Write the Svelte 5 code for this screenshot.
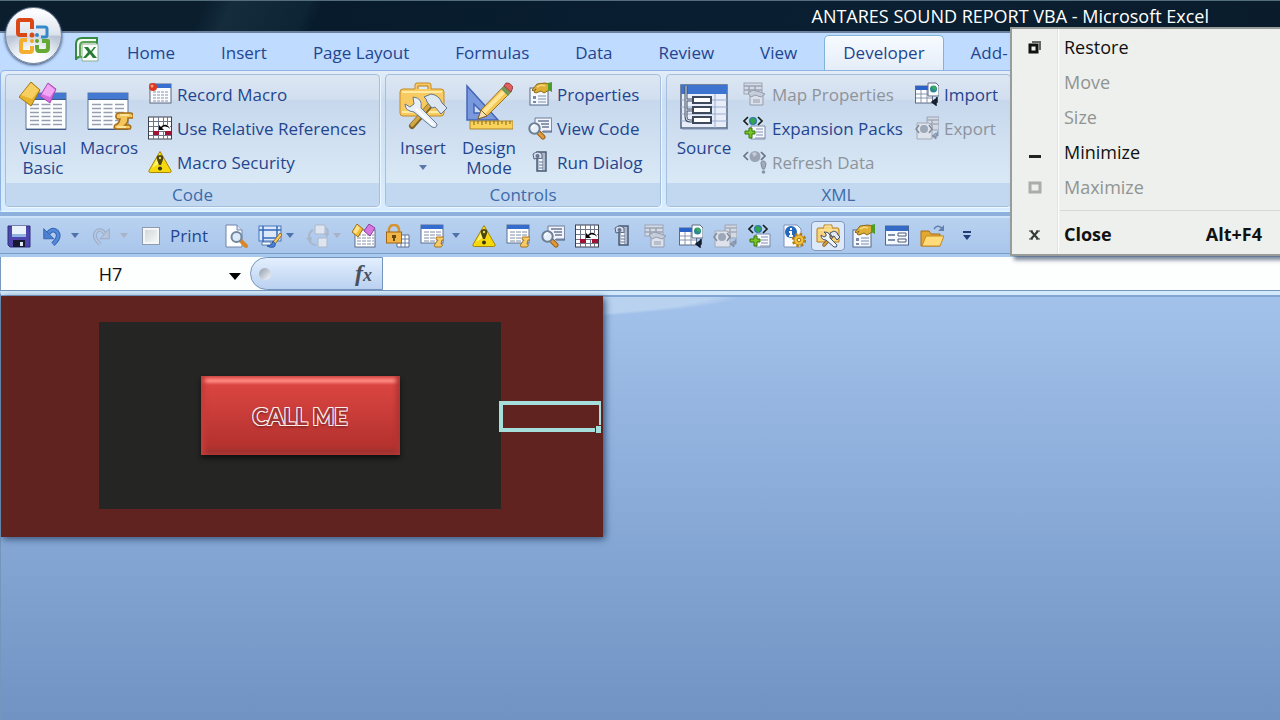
<script lang="ts">
  /**
   * Spreadsheet window: ribbon on the Developer tab, quick access toolbar,
   * formula bar, worksheet and the window's system menu
   */

  interface Command {
    icon: string;
    label: string;
    disabled?: boolean;
  }

  const tabs = [
    "Home",
    "Insert",
    "Page Layout",
    "Formulas",
    "Data",
    "Review",
    "View",
    "Developer",
    "Add-",
  ];

  const codeCommands: Command[] = [
    { icon: "record", label: "Record Macro" },
    { icon: "relative", label: "Use Relative References" },
    { icon: "warning", label: "Macro Security" },
  ];

  const controlCommands: Command[] = [
    { icon: "properties", label: "Properties" },
    { icon: "viewcode", label: "View Code" },
    { icon: "dialog", label: "Run Dialog" },
  ];

  const xmlCommands: Command[] = [
    { icon: "map", label: "Map Properties", disabled: true },
    { icon: "expansion", label: "Expansion Packs" },
    { icon: "refresh", label: "Refresh Data", disabled: true },
  ];

  const xmlTransfer: Command[] = [
    { icon: "import", label: "Import" },
    { icon: "export", label: "Export", disabled: true },
  ];

  const shortcuts = [
    "warning",
    "macros",
    "viewcode",
    "relative",
    "dialog",
    "map",
    "import",
    "export",
    "expansion",
    "addins",
    "toolbox",
    "properties",
    "form",
    "folder",
  ];

  let activeTab = $state("Developer");
  let cellName = $state("H7");
  let formula = $state("");
  let printChecked = $state(false);
</script>

{#snippet icon(name: string, size: number = 24)}
  <svg class="icon" width={size} height={size} viewBox="0 0 24 24" aria-hidden="true">
    {#if name === "record"}
      <rect x="2" y="2" width="21" height="19" fill="#fbfcff" stroke="#59677f" />
      <rect x="2" y="2" width="21" height="4" fill="#376fd0" />
      <path d="M5 10h15M5 13h15M5 16h15M5 19h15" stroke="#8791a8" stroke-dasharray="3 1" />
      <circle cx="5" cy="5" r="4" fill="#db3a20" />
      <circle cx="4" cy="4" r="1.5" fill="#ff9a80" />
    {:else if name === "relative"}
      <rect x="0.5" y="1" width="23" height="22" fill="#fff" stroke="#3a3f4e" />
      <path
        d="M5.500 1v22M10.500 1v22M15.500 1v22M19.500 1v22M1 5.500h22M1 10.500h22M1 15.500h22M1 19.500h22"
        stroke="#70768a"
      />
      <rect x="11" y="9" width="11" height="6" fill="#fff" />
      <rect x="5" y="15" width="6" height="4" fill="#a40f34" />
      <rect x="17" y="15" width="6" height="4" fill="#a40f34" />
      <path d="M11 9v5h5l-2-2c2-2 5-2 8 1-1-4-6-6-9-2z" fill="#000" />
    {:else if name === "warning"}
      <path
        d="M12 1.500 23 20.500q.8 2-1.500 2h-19q-2.300 0-1.500-2z"
        fill="#f6d90c"
        stroke="#a78508"
        stroke-linejoin="round"
      />
      <path d="M12 3 4 18l8-5z" fill="#fff46b" />
      <path d="M12 5q5 0 2.500 6L13 15h-2l-1.500-4Q7 5 12 5z" fill="#4b4514" />
      <circle cx="12" cy="8" r="1.200" fill="#e8da5b" />
      <circle cx="12" cy="18.500" r="2" fill="#3a3512" />
    {:else if name === "properties"}
      <rect x="2" y="6" width="18" height="17" fill="#f5f8ff" stroke="#526887" />
      <path d="M5 14h3v3H5zM5 19h3v2H5z" fill="#7c89a3" />
      <path d="M10 14h8M10 17h8M10 20h8" stroke="#788dad" />
      <path
        d="M4 8 9 2l8-1 4 1v6l-5 3-3-2-5 2-2-1 2-3-3 2z"
        fill="#deae35"
        stroke="#8a6818"
        stroke-linejoin="round"
      />
      <path d="m9 5 4-2 4 1" fill="none" stroke="#f6d87c" stroke-width="1.500" />
      <path d="m20 1 4-1v10l-4-2z" fill="#4e9d28" />
    {:else if name === "viewcode"}
      <path d="M7 2h17v13h-9l-3 3v-3H7z" fill="#f1f4fc" stroke="#6d7b98" />
      <path d="M10 5h11M13 8h8M14 11h7" stroke="#6b7997" stroke-width="1.400" />
      <path d="M24 3v13h-9" fill="none" stroke="#4f5f80" />
      <path d="m11 17 4 4" stroke="#9c6118" stroke-width="5" stroke-linecap="round" />
      <path d="m11 17 4 4" stroke="#e29a3a" stroke-width="3" stroke-linecap="round" />
      <circle cx="6.500" cy="12.500" r="5.200" fill="#e7f0fa" stroke="#6d7f95" stroke-width="2" />
      <path d="M4 12q0-3 3-3" fill="none" stroke="#fff" stroke-width="1.500" />
    {:else if name === "dialog"}
      <path d="M9 2h9v19h-9z" fill="#aeb9cc" stroke="#4c5c78" stroke-width="1.500" />
      <path d="M5 4q5-4 9 0v5q-4-2-8 0z" fill="#d5ddeb" stroke="#53627c" />
      <circle cx="9.500" cy="6" r="2" fill="#647694" />
      <path d="M11 9h3v11h-3z" fill="#f2f6ff" />
      <path d="M11 12h4M11 15h4M11 18h4" stroke="#64728b" />
    {:else if name === "map"}
      <rect x="1" y="1" width="18" height="11" fill="#d6dbe6" stroke="#9ba4b5" />
      <path d="M1 4h18M6 4v8M12 4v8M1 8h18" stroke="#9ba4b5" stroke-width="1.500" />
      <path d="M7 12h13v11H7z" fill="#dce1eb" stroke="#929cae" />
      <path d="m5 11 5-3 7 2 5 2-4 3-6-2-4 2z" fill="#c5ccda" stroke="#929cae" />
      <path d="M10 18h7M10 20h7" stroke="#929cae" />
    {:else if name === "expansion"}
      <path d="M8 10h14v13H8z" fill="#f6f9ff" stroke="#7d8baa" />
      <path d="M13 13h7M13 16h7M13 19h7M12 22h10" stroke="#8290ac" />
      <path d="m5 1-4 4 4 4M15 1l4 4-4 4" fill="none" stroke="#16221e" stroke-width="1.700" />
      <circle cx="10" cy="5" r="4" fill="#2b78b5" />
      <path d="M8 2q5 0 5 3l-3 4-3-4z" fill="#35a54a" />
      <path
        d="M6 12h3v3h3v3H9v4H6v-4H2v-3h4z"
        fill="#79c525"
        stroke="#35770d"
        stroke-linejoin="round"
      />
    {:else if name === "refresh"}
      <path d="M5 2 1 6l4 4M18 2l4 4-4 4" fill="none" stroke="#687488" stroke-width="1.700" />
      <circle cx="12" cy="6.500" r="5.500" fill="#9aa4b5" />
      <path d="M9 3q4-2 5 1l-3 3z" fill="#c6ccd8" />
      <path d="M20 11q4 0 2.500 5l-1 3h-2l-1-3Q17 11 20 11z" fill="#a1abba" stroke="#7f8999" />
      <circle cx="20.500" cy="22" r="1.800" fill="#8a94a5" />
    {:else if name === "import"}
      <rect x="0.500" y="4" width="17" height="17" fill="#fff" stroke="#5b6b8b" />
      <path d="M1 4h17v4H1z" fill="#2b62c7" />
      <path d="M1 12h16M1 16h16M6 8v13M12 8v13" stroke="#8694b1" />
      <path d="M13 1h8l3 3v10H13z" fill="#f7faff" stroke="#5e6b82" />
      <circle cx="18.500" cy="7" r="3.500" fill="#2b8791" />
      <path d="M17 4q5 0 4 4l-3-1z" fill="#39b444" />
      <path d="M22 15v5h-3M21 17l-4 3 4 3z" fill="#111b2c" stroke="#111b2c" stroke-width="1.500" />
    {:else if name === "export"}
      <path d="M12 1h12v13H12z" fill="#d4d9e3" stroke="#9aa3b3" />
      <path d="M12 4h12M12 8h12M17 4v10" stroke="#a2abba" stroke-width="1.500" />
      <path d="M2 7h12l3 3v13H2z" fill="#dde2eb" stroke="#a1a9b7" />
      <path d="m4 9-3 4 3 4M14 9l3 4-3 4" fill="none" stroke="#828d9e" stroke-width="1.500" />
      <circle cx="9" cy="13" r="4" fill="#9ca7b8" />
      <path d="M23 15v5h-4M21 17l-4 3 4 3z" fill="#8794aa" stroke="#8794aa" />
    {:else if name === "macros"}
      <rect x="1" y="1" width="22" height="18" fill="#fff" stroke="#5f708f" />
      <path d="M1 1h22v4H1z" fill="#356dce" />
      <path d="M4 8h17M4 11h17M4 14h15M4 17h13" stroke="#7f8ba5" stroke-dasharray="5 1" />
      <path
        d="M16 14q0-1 1-1h7v3h-2l-1 4h1q1 2-1 3h-6q-1-2 0-3l3-4h-1q-1 0-1-2z"
        fill="#f6cb66"
        stroke="#a87019"
        stroke-linejoin="round"
      />
    {:else if name === "addins"}
      <path d="M2 1h13l4 4v18H2z" fill="#f9fbff" stroke="#7a92b8" />
      <circle cx="9" cy="8" r="6" fill="#2468bd" />
      <path d="M9 4v2M7 8h2v4M7 12h4" fill="none" stroke="#fff" stroke-width="2" />
      <circle
        cx="17"
        cy="16"
        r="6"
        fill="none"
        stroke="#b27a12"
        stroke-width="2.500"
        stroke-dasharray="2.500 2.200"
      />
      <circle cx="17" cy="16" r="5" fill="#f0c23b" stroke="#b88216" />
      <circle cx="17" cy="16" r="1.800" fill="#fff3b3" stroke="#a66e10" />
    {:else if name === "toolbox"}
      <path
        d="M8 4V1h8v3h6q1 0 1 2v12H1V6q0-2 1-2z"
        fill="#f9d47c"
        stroke="#b77b19"
        stroke-linejoin="round"
      />
      <path d="M9 4V2h6v2M3 6h18" fill="none" stroke="#ffeaa2" />
      <path d="m8 21 10-11" stroke="#77501e" stroke-width="3.500" stroke-linecap="round" />
      <path d="m8 21 10-11" stroke="#d4a23c" stroke-width="2" stroke-linecap="round" />
      <path d="m14 9 4-2q4 1 4 4l2 2-3 3-3-4-2 1z" fill="#e2e9f3" stroke="#43546d" />
      <path
        d="m8 8 2 2v2l-2 1-3-2q0 5 5 5l8 7q3 1 3-2l-7-7q1-6-6-6z"
        fill="#eff3f8"
        stroke="#43546d"
      />
    {:else if name === "form"}
      <rect x="0.500" y="2" width="23" height="19" fill="#f6f9ff" stroke="#4c6594" />
      <path d="M1 2h22v5H1z" fill="#336ac5" />
      <path d="M3 11h7M3 16h7" stroke="#5a6c8e" stroke-width="1.500" />
      <path d="M13 9h8v3h-8zM13 15h8v3h-8z" fill="#fff" stroke="#485b7c" />
    {:else if name === "folder"}
      <path d="M1 7h8l2 3h9v12H1z" fill="#e3a831" stroke="#a96f18" />
      <path d="M6 12h18l-4 10H2z" fill="#ffdc79" stroke="#c48a22" />
      <path d="M14 5q3-5 8-1" fill="none" stroke="#6480ae" stroke-width="1.500" />
      <path d="m24 1v6h-6z" fill="#6480ae" />
    {:else if name === "save"}
      <path d="M1 2h22v21H3l-2-2z" fill="#4c46ae" stroke="#302d77" />
      <path d="M5 2h14v10H5z" fill="#e9f1fb" />
      <path d="M5 10h14v3H5z" fill="#91b3e1" />
      <path d="M6 16h12v7H6z" fill="#15182e" />
      <path d="M13 18h3v4h-3z" fill="#e0e8f6" />
    {:else if name === "undo"}
      <path d="M7 10q5-7 10-3 5 6-4 14" fill="none" stroke="#3463b4" stroke-width="5" />
      <path d="M7 10q5-7 10-3 5 6-4 14" fill="none" stroke="#5488d8" stroke-width="3" />
      <path d="M3 4v11h11z" fill="#4c80d1" stroke="#3463b4" stroke-linejoin="round" />
    {:else if name === "redo"}
      <path d="M17 10q-5-7-10-3-5 6 4 14" fill="none" stroke="#98aac6" stroke-width="4" />
      <path d="M17 10q-5-7-10-3-5 6 4 14" fill="none" stroke="#b7c7df" stroke-width="2" />
      <path d="M21 4v11H11z" fill="#b7c5da" stroke="#98aac6" stroke-linejoin="round" />
    {:else if name === "preview"}
      <path d="M2 1h11l5 5v17H2z" fill="#fdfeff" stroke="#7085aa" />
      <path d="M13 1v5h5" fill="#dce6f6" stroke="#7085aa" />
      <path d="m16 16 6 6" stroke="#da872a" stroke-width="4" stroke-linecap="round" />
      <circle cx="12.500" cy="13" r="5" fill="#dbeaf8" stroke="#73879f" stroke-width="2" />
    {:else if name === "edit"}
      <rect x="1" y="2" width="22" height="15" fill="#dce8fa" stroke="#4976bd" />
      <path d="M1 6h22M5 2v18M19 2v15M5 14h14" fill="none" stroke="#3169bc" stroke-width="1.500" />
      <path d="M4 18h9v3H4z" fill="#fff" stroke="#557bad" />
      <path d="m15 18 7-9 2 2-7 9z" fill="#f8ca64" stroke="#9a702c" />
      <path d="M15 17q4 3 1 6-4 1-7-1 5 0 6-5z" fill="#4b82d7" stroke="#2c58a4" />
    {:else if name === "sync"}
      <path d="M10 1h10v9H10zM13 14h9v9h-9z" fill="#dfe5ef" stroke="#acb7ca" />
      <path d="M8 6q-6 3-3 11M21 4q3 3 1 8M4 16q2 5 7 5" fill="none" stroke="#aab7cb" stroke-width="2" />
      <path d="m1 14 5 5 1-6zM19 9h5l-2 5z" fill="#aab7cb" />
    {:else if name === "basic"}
      <rect x="3" y="6" width="20" height="17" fill="#fff" stroke="#5d6d8d" />
      <path d="M5 11h17M5 14h17M5 17h17M5 20h17" stroke="#8490aa" stroke-dasharray="4 1" />
      <path d="M5 0 11 5 6 13 0 8z" fill="#efbd37" stroke="#9c7014" />
      <path d="m17 0 6 4-5 8-6-5z" fill="#d577df" stroke="#923c9e" />
      <path d="m5 1 3 3-4 6-3-2z" fill="#ffe288" />
    {:else if name === "lock"}
      <path d="M11 11h12v12H11z" fill="#fff" stroke="#61718f" />
      <path d="M11 15h12M11 19h12M15 11v12M19 11v12" stroke="#6580ae" />
      <path d="M3 9V5q1-4 5-4t5 4v4" fill="none" stroke="#d5942f" stroke-width="2.500" />
      <rect x="0.500" y="8" width="15" height="11" fill="#f0b545" stroke="#a16716" />
      <path d="M6 11h4v3H9v3H7v-3H6z" fill="#684711" />
    {/if}
  </svg>
{/snippet}

{#snippet bigIcon(name: string)}
  <svg class="icon" width="48" height="48" viewBox="0 0 48 48" aria-hidden="true">
    {#if name === "basic" || name === "macros"}
      {@const left = name === "basic" ? 7 : 3}
      <rect x={left} y="11" width="40" height="36" fill="#fdfeff" stroke="#60779b" />
      <rect x={left} y="11" width="40" height="7" fill="#4479d2" />
      <path d="M{left} 17.500h40M{left} 47.500h40" stroke="#3d598c" />
      {#each [22, 26, 30, 34, 38, 42] as y}
        <path d="M{left + 4} {y}.500h32" stroke="#969eaf" stroke-width="1.500" stroke-dasharray="9 2.500" />
      {/each}
      {#if name === "basic"}
        <path d="m12 0 9 8-9 16L0 15z" fill="#e7b32d" stroke="#a37618" />
        <path d="m12 1 8 7-7 9-11-4z" fill="#f6cf60" />
        <path d="m29 1 8 6-6 14-10-7z" fill="#d76de1" stroke="#a54bb2" />
        <path d="m29 2 7 6-5 7-8-3z" fill="#f2a7f4" />
      {:else}
        <path
          d="M31 34q0-3 4-3h11q3 1 2 5h-5q0 5-3 7h4q3 1 1 4H31q-3-1-1-4 4-1 5-6h-2q-2 0-2-3z"
          fill="#f3c75d"
          stroke="#a87019"
          stroke-width="1.500"
        />
        <path d="M36 32h6l-4 12h-4q4-4 4-10z" fill="#f3c75d" />
        <path d="M35 33h9M32 45h9" stroke="#fff0ad" stroke-width="1.500" />
      {/if}
    {:else if name === "toolbox"}
      <path
        d="M16 7V3q0-2 2-2h12q2 0 2 2v4h10q3 0 3 3v21q0 3-3 3H4q-3 0-3-3V10q0-3 3-3z"
        fill="#f7cb61"
        stroke="#c38a26"
      />
      <path d="M19 7V4h10v3" fill="#ddebf8" stroke="#b57b1e" />
      <path d="M3 10h40M3 30h40" stroke="#ffeaa1" stroke-width="2" />
      <path d="m13 44 22-25" stroke="#826324" stroke-width="6" stroke-linecap="round" />
      <path d="m13 43 22-25" stroke="#d2a744" stroke-width="3.500" stroke-linecap="round" />
      <path
        d="m25 15 7-3q8 1 11 9l5 5-6 6-6-7-3 1-5-6q0-3-3-5z"
        fill="#dce7f2"
        stroke="#62758e"
        stroke-linejoin="round"
      />
      <path
        d="m14 15 1 7-4 3-5-3q0 7 9 8l18 15q5 2 5-3L22 26q2-10-8-11z"
        fill="#e9f0f7"
        stroke="#657b94"
        stroke-linejoin="round"
      />
      <path d="m17 27 17 16" stroke="#fff" stroke-width="2" />
    {:else if name === "design"}
      <path d="M2 4v34h31z" fill="#7899de" stroke="#4566b7" stroke-width="1.500" />
      <path d="M9 22v9h9z" fill="#d0def3" stroke="#4566b7" stroke-width="1.500" />
      <path d="m13 37 3-9L39 4l7 6-24 24z" fill="#f5c652" stroke="#99712a" />
      <path d="m17 29 22-22 3 2-22 23z" fill="#ffe697" />
      <path d="m36 7 4-4 7 6-4 5z" fill="#739657" />
      <path d="m39 4 2-3q4-1 7 4l-2 5z" fill="#e05f5d" stroke="#974043" />
      <path d="m13 37 3-9 6 6z" fill="#f8dfb0" stroke="#79603b" />
      <path d="M5 39h43v8H5z" fill="#f8d259" stroke="#ae852c" />
      <path
        d="M9 39v4M13 39v3M17 39v4M21 39v3M25 39v4M29 39v3M33 39v4M37 39v3M41 39v4M45 39v3"
        stroke="#806421"
      />
    {:else if name === "source"}
      <rect x="1" y="3" width="46" height="43" fill="#e8eef9" stroke="#55647e" stroke-width="1.500" />
      <path d="M1 3h46v9H1z" fill="#3d74d0" />
      <path d="M1 18h46M1 25h46M1 32h46M1 39h46M35 12v34" stroke="#9badce" />
      <path d="M6 4v31q0 4 4 4h4M6 18h8M6 28h8" fill="none" stroke="#445066" stroke-width="3" />
      <path d="M6 4v31q0 4 4 4h4M6 18h8M6 28h8" fill="none" stroke="#dce4f0" />
      <path d="M13 15h18v6H13zM13 25h18v6H13zM13 35h18v6H13z" fill="#fff" stroke="#3f495e" stroke-width="2" />
      <path d="M2 47h46V7" fill="none" stroke="#7c8faf" />
    {/if}
  </svg>
{/snippet}

{#snippet arrow()}
  <svg class="arrow" width="10" height="6" viewBox="0 0 10 6" aria-hidden="true">
    <path d="M1 0h8L5 5z" fill="currentColor" />
  </svg>
{/snippet}

{#snippet commands(items: Command[])}
  <div class="command-column">
    {#each items as item}
      <button class="command" disabled={item.disabled}>
        {@render icon(item.icon)}
        <span>{item.label}</span>
      </button>
    {/each}
  </div>
{/snippet}

<div class="window">
  <header class="title-bar">
    <h1>ANTARES SOUND REPORT VBA - Microsoft Excel</h1>
    <button class="office-button" aria-label="Office Button">
      <svg width="36" height="38" viewBox="0 0 36 38" aria-hidden="true">
        <g fill="none" stroke-linejoin="round">
          <path d="M11 18H4q-2 0-2-2V5q0-2 2-2h10q2 0 2 2v7" stroke="#da4717" stroke-width="4" />
          <path d="M20 10h9q2 0 2 2v6q0 2-2 2h-4" stroke="#3589ca" stroke-width="3" />
          <path d="M11 23H7q-2 0-2 2v8q0 2 2 2h7q2 0 2-2v-4" stroke="#f4ae32" stroke-width="4" />
          <path d="M26 24h6v7q0 3-3 3h-6q-2 0-2-3v-3" stroke="#65a932" stroke-width="4" />
        </g>
        <circle cx="16" cy="18" r="2.500" fill="#d84b20" />
        <circle cx="21" cy="18" r="2" fill="#3589ca" />
        <circle cx="16" cy="24" r="2" fill="#f1a629" />
        <circle cx="21" cy="24" r="2" fill="#62a330" />
      </svg>
    </button>
  </header>

  <nav class="tabs">
    <svg class="app-icon" width="25" height="26" viewBox="0 0 25 26" aria-hidden="true">
      <path d="M7 1h15v19H5q-4 0-4 3V7q0-6 6-6z" fill="#f3faf1" stroke="#368b3e" stroke-width="2" />
      <path d="M5 21V9q0-4 4-4h12" fill="none" stroke="#5aa453" stroke-width="2" />
      <path d="M7 7h16v17H7z" fill="#fbfdf9" stroke="#8caf94" />
      <path d="m9 10 4 0 3 4 3-4h2l-4 5 5 6h-4l-3-4-4 4H8l5-6z" fill="#267b35" />
    </svg>
    {#each tabs as tab}
      <button class="tab" class:active={activeTab === tab} onclick={() => (activeTab = tab)}>
        {tab}
      </button>
    {/each}
  </nav>

  <section class="ribbon" aria-label="Developer">
    <div class="group code">
      <div class="group-body">
        <button class="big">{@render bigIcon("basic")}<span>Visual Basic</span></button>
        <button class="big">{@render bigIcon("macros")}<span>Macros</span></button>
        {@render commands(codeCommands)}
      </div>
      <div class="group-label">Code</div>
    </div>
    <div class="group controls">
      <div class="group-body">
        <button class="big">{@render bigIcon("toolbox")}<span>Insert</span>{@render arrow()}</button>
        <button class="big">{@render bigIcon("design")}<span>Design Mode</span></button>
        {@render commands(controlCommands)}
      </div>
      <div class="group-label">Controls</div>
    </div>
    <div class="group xml">
      <div class="group-body">
        <button class="big">{@render bigIcon("source")}<span>Source</span></button>
        {@render commands(xmlCommands)}
        {@render commands(xmlTransfer)}
      </div>
      <div class="group-label">XML</div>
    </div>
  </section>

  <div class="quick-bar">
    <button class="tool" aria-label="Save">{@render icon("save")}</button>
    <button class="tool split" aria-label="Undo">{@render icon("undo", 22)}{@render arrow()}</button>
    <button class="tool split" aria-label="Redo" disabled>
      {@render icon("redo", 22)}{@render arrow()}
    </button>
    <label class="print">
      <input type="checkbox" bind:checked={printChecked} />
      <span>Print</span>
    </label>
    <button class="tool" aria-label="Print preview">{@render icon("preview")}</button>
    <button class="tool split tight" aria-label="Edit form">
      {@render icon("edit")}{@render arrow()}
    </button>
    <button class="tool split tight" aria-label="Refresh" disabled>
      {@render icon("sync")}{@render arrow()}
    </button>
    <button class="tool" aria-label="Visual Basic">{@render icon("basic")}</button>
    <button class="tool" aria-label="Protect sheet">{@render icon("lock")}</button>
    <button class="tool split" aria-label="Macros">{@render icon("macros")}{@render arrow()}</button>
    <div class="shortcuts">
      {#each shortcuts as name}
        <button class="tool" class:selected={name === "toolbox"} aria-label={name}>
          {@render icon(name)}
        </button>
      {/each}
    </div>
    <button class="more" aria-label="Customize toolbar">
      <svg width="10" height="10" viewBox="0 0 10 10" aria-hidden="true">
        <path d="M1 0h8v2H1zM1 4h8L5 9z" fill="#213e78" />
      </svg>
    </button>
  </div>

  <div class="formula-bar">
    <input class="name-box" aria-label="Name box" bind:value={cellName} />
    <button class="name-arrow" aria-label="Cell names">
      <svg width="12" height="7" viewBox="0 0 12 7" aria-hidden="true">
        <path d="M0 0h12L6 7z" fill="#000" />
      </svg>
    </button>
    <div class="function-area">
      <span class="knob"></span>
      <button class="fx" aria-label="Insert function"><i>f</i><i class="sub">x</i></button>
    </div>
    <input class="formula" aria-label="Formula" bind:value={formula} />
  </div>

  <main class="workspace">
    <div class="sheet">
      <div class="panel">
        <button class="call">CALL ME</button>
      </div>
      <div class="selection"></div>
    </div>
  </main>

  <div class="system-menu" role="menu">
    <button role="menuitem">
      <svg width="14" height="14" viewBox="0 0 14 14" aria-hidden="true">
        <path d="M4 2h8v8" fill="none" stroke="#656865" stroke-width="2" />
        <path d="M2 5h7v7H2z" fill="#eff1ee" stroke="#111" stroke-width="3" />
      </svg>
      <span>Restore</span>
    </button>
    <button role="menuitem" disabled><i></i><span>Move</span></button>
    <button role="menuitem" disabled><i></i><span>Size</span></button>
    <button role="menuitem">
      <svg width="14" height="14" viewBox="0 0 14 14" aria-hidden="true">
        <path d="M1 10h12v3H1z" fill="#222" />
      </svg>
      <span>Minimize</span>
    </button>
    <button role="menuitem" disabled>
      <svg width="14" height="14" viewBox="0 0 14 14" aria-hidden="true">
        <path d="M2 3h10v9H2z" fill="none" stroke="#a9adab" stroke-width="3" />
      </svg>
      <span>Maximize</span>
    </button>
    <hr />
    <button class="close" role="menuitem">
      <svg width="14" height="14" viewBox="0 0 14 14" aria-hidden="true">
        <path d="m3 4 7 8M10 4l-7 8" stroke="#333936" stroke-width="2" />
        <path d="M1 4h4M8 4h4M1 12h4M8 12h4" stroke="#333936" stroke-width="1" />
      </svg>
      <span>Close</span>
      <kbd>Alt+F4</kbd>
    </button>
  </div>
</div>

<style>
  :global(body) {
    margin: 0;
  }

  .window {
    position: relative;
    display: flex;
    flex-direction: column;
    min-height: 100vh;
    overflow: hidden;
    background: #bfdbff;
    font-family: "Open Sans", "Noto Sans", sans-serif;
    font-size: 17px;
    color: #23458f;
  }

  button,
  input {
    padding: 0;
    border: none;
    background: none;
    font: inherit;
    color: inherit;
  }

  button:disabled {
    color: #8d939b;
  }

  .icon,
  .arrow {
    display: block;
    flex: none;
  }

  .title-bar {
    display: flex;
    justify-content: flex-end;
    height: 33px;
    padding-right: 71px;
    border-top: 1px solid #536d7c;
    border-bottom: 2px solid #6c819c;
    box-sizing: border-box;
    background: linear-gradient(115deg, #0a1e2e 16%, #142c3c 18%, #0d2434 24%, #071b2c 25%, #0a2032 70%, #0a1c2c);
  }

  h1 {
    margin: 0;
    font-size: 18px;
    font-weight: 400;
    line-height: 31px;
    white-space: nowrap;
    color: #fff;
  }

  .office-button {
    position: absolute;
    top: 7px;
    left: 5px;
    z-index: 2;
    display: flex;
    align-items: center;
    justify-content: center;
    width: 57px;
    height: 57px;
    border: 1px solid #718197;
    border-radius: 50%;
    background: radial-gradient(circle at 50% 90%, #fff 8%, transparent 50%),
      linear-gradient(#fbfcfe 8%, #dce3ec 48%, #b8c4d5 52%, #edf3fb);
    box-shadow: 0 1px 3px #35496d;
  }

  .tabs {
    display: flex;
    align-items: stretch;
    gap: 8px;
    height: 37px;
    padding: 0 0 0 75px;
  }

  .app-icon {
    flex: none;
    margin-top: 4px;
  }

  .tab {
    flex: none;
    margin-top: 2px;
    padding: 0 18px;
    border: 1px solid transparent;
    border-bottom: none;
    border-radius: 5px 5px 0 0;
    line-height: 34px;
    white-space: nowrap;
  }

  .tab.active {
    border-color: #7fb4d6;
    background: linear-gradient(#f7fbff, #e4edf8);
    box-shadow: inset 0 1px #fff;
  }

  .ribbon {
    display: flex;
    gap: 5px;
    padding: 3px 4px 4px;
    border: 1px solid #8db2e3;
    border-bottom: 2px solid #e2f8ff;
    border-radius: 5px;
    background: linear-gradient(#e3edf8, #cadef3 20%, #d8edff);
  }

  .group {
    display: flex;
    flex-direction: column;
    border: 1px solid #a4bfdd;
    border-radius: 4px;
    background: linear-gradient(#dde7f3, #d2dfef 18%, #c7d8ed 20%, #d9e8f5 80%);
    box-shadow: 1px 1px #eef7ff;
    overflow: hidden;
  }

  .code {
    flex: 0 0 373px;
  }

  .controls {
    flex: 0 0 274px;
  }

  .xml {
    flex: 0 0 343px;
  }

  .group-body {
    display: flex;
    height: 108px;
    padding-left: 4px;
  }

  .big {
    display: flex;
    flex-direction: column;
    align-items: center;
    flex: none;
    width: 66px;
    padding-top: 7px;
    line-height: 20px;
  }

  .big span {
    margin-top: 8px;
  }

  .big .arrow {
    margin-top: 7px;
    color: #5b78aa;
  }

  .command-column {
    display: flex;
    flex-direction: column;
    margin-left: 6px;
    padding-top: 2px;
  }

  .command-column + .command-column {
    margin-left: 12px;
  }

  .command {
    display: flex;
    align-items: center;
    gap: 5px;
    height: 34px;
    white-space: nowrap;
  }

  .group-label {
    height: 23px;
    background: #c1d8f0;
    line-height: 24px;
    text-align: center;
    color: #3e6aaa;
  }

  .quick-bar {
    display: flex;
    align-items: center;
    gap: 10px;
    height: 35px;
    margin-top: 3px;
    padding-left: 7px;
    border-top: 2px solid #cde2fb;
    border-bottom: 1px solid #789fc8;
    box-shadow: 0 -4px #8eb0dd;
    background: linear-gradient(#b8d1f0, #a9c6eb);
  }

  .tool {
    display: flex;
    align-items: center;
    flex: none;
  }

  .tool .arrow {
    margin-left: 7px;
    color: #4e72ab;
  }

  .tool.tight .arrow {
    margin-left: 3px;
  }

  .tool:disabled .arrow {
    color: #a8b3c5;
  }

  .print {
    display: flex;
    align-items: center;
    gap: 10px;
    margin: 0 6px 0 3px;
  }

  .print input {
    appearance: none;
    width: 18px;
    height: 18px;
    margin: 0;
    border: 1px solid #919baf;
    background: linear-gradient(135deg, #cdd2d6, #fbfcfc);
    box-shadow: inset 0 0 0 2px #f4f6f7;
  }

  .shortcuts {
    display: flex;
    align-items: center;
    justify-content: space-between;
    flex: 0 0 472px;
    margin-left: 1px;
  }

  .tool.selected {
    margin: 0 -5px;
    padding: 2px 4px;
    border: 1px solid #8199c0;
    border-radius: 4px;
    background: #dce9fa;
  }

  .more {
    display: flex;
    margin-left: 8px;
  }

  .formula-bar {
    display: flex;
    align-items: stretch;
    height: 33px;
    border-top: 3px solid #a9c9ed;
    border-bottom: 1px solid #7595bb;
    background: #fdfefe;
  }

  .name-box {
    width: 219px;
    border-left: 1px solid #799ac0;
    font-size: 18px;
    text-align: center;
    color: #111;
  }

  .name-arrow {
    width: 30px;
  }

  .function-area {
    display: flex;
    align-items: center;
    justify-content: space-between;
    width: 133px;
    padding: 0 10px 0 8px;
    border: 1px solid #7495bf;
    border-radius: 17px 0 0 17px;
    box-sizing: border-box;
    background: linear-gradient(#e3effe, #bad1f0);
  }

  .knob {
    width: 12px;
    height: 12px;
    border-radius: 50%;
    background: linear-gradient(135deg, #8f9aab, #f8fbff);
  }

  .fx {
    font-family: "Liberation Serif", serif;
    font-size: 24px;
    font-weight: 700;
    line-height: 28px;
    color: #4a515e;
  }

  .sub {
    font-size: 18px;
  }

  .formula {
    flex: 1;
    min-width: 0;
    padding: 0 8px;
    color: #111;
  }

  .workspace {
    flex: 1;
    border-top: 4px solid #d2e9fb;
    border-left: 1px solid #7595bb;
    background: radial-gradient(ellipse 740px 36px at 0 0, #b9d2f0 96%, transparent 100%),
      linear-gradient(#a3c2eb, #7093c4);
    box-shadow: inset 0 2px #81a5d2;
  }

  .sheet {
    position: relative;
    display: flex;
    width: 602px;
    margin-top: 1px;
    padding: 26px 0 28px 98px;
    box-sizing: border-box;
    background: #61231f;
    box-shadow: 2px 2px 7px #345075;
  }

  .panel {
    display: flex;
    align-items: center;
    justify-content: center;
    width: 402px;
    height: 187px;
    background: #252623;
  }

  .call {
    width: 199px;
    height: 79px;
    box-sizing: border-box;
    background: linear-gradient(#fd6d66, #fd8a82 5px, #da4541 9px, #b5322f 88%, #983331);
    box-shadow: inset 4px 0 4px #c43c3a, inset -4px 0 4px #b03533, 0 3px 5px #101110;
    font-family: Lato, sans-serif;
    font-size: 23px;
    font-weight: 700;
    line-height: 32px;
    color: #a33534;
    text-shadow:
      -1px -1px #ffece8,
      1px -1px #ffece8,
      -1px 1px #ffece8,
      1px 1px #ffece8,
      0 2px 3px #6d201f;
  }

  .selection {
    position: absolute;
    top: 105px;
    left: 498px;
    width: 96px;
    height: 23px;
    border: 4px solid #a5dedb;
    border-right-width: 2px;
  }

  .selection::after {
    content: "";
    position: absolute;
    right: -3px;
    bottom: -6px;
    width: 5px;
    height: 7px;
    border: 1px solid #61231f;
    background: #a5dedb;
  }

  .system-menu {
    position: absolute;
    top: 27px;
    right: 0;
    z-index: 3;
    width: 270px;
    padding: 0 0 3px;
    border: 2px solid #989c9b;
    border-right: none;
    box-sizing: border-box;
    background: linear-gradient(90deg, transparent 45px, #dfe2df 45px, #dfe2df 46px, #fff 46px, #fff 47px, transparent 47px)
      #edf0ed;
    box-shadow: 4px 4px 4px #3e536cb0;
    font-size: 18px;
    color: #111;
  }

  .system-menu button {
    display: grid;
    grid-template-columns: 14px 1fr auto;
    align-items: center;
    gap: 22px;
    width: 100%;
    height: 35px;
    padding: 0 18px 0 16px;
    text-align: left;
  }

  .system-menu button:disabled {
    color: #919492;
  }

  .system-menu hr {
    height: 1px;
    margin: 6px 0 5px 48px;
    border: none;
    background: #d6d9d6;
  }

  .system-menu .close,
  kbd {
    font-family: inherit;
    font-weight: 700;
  }
</style>
